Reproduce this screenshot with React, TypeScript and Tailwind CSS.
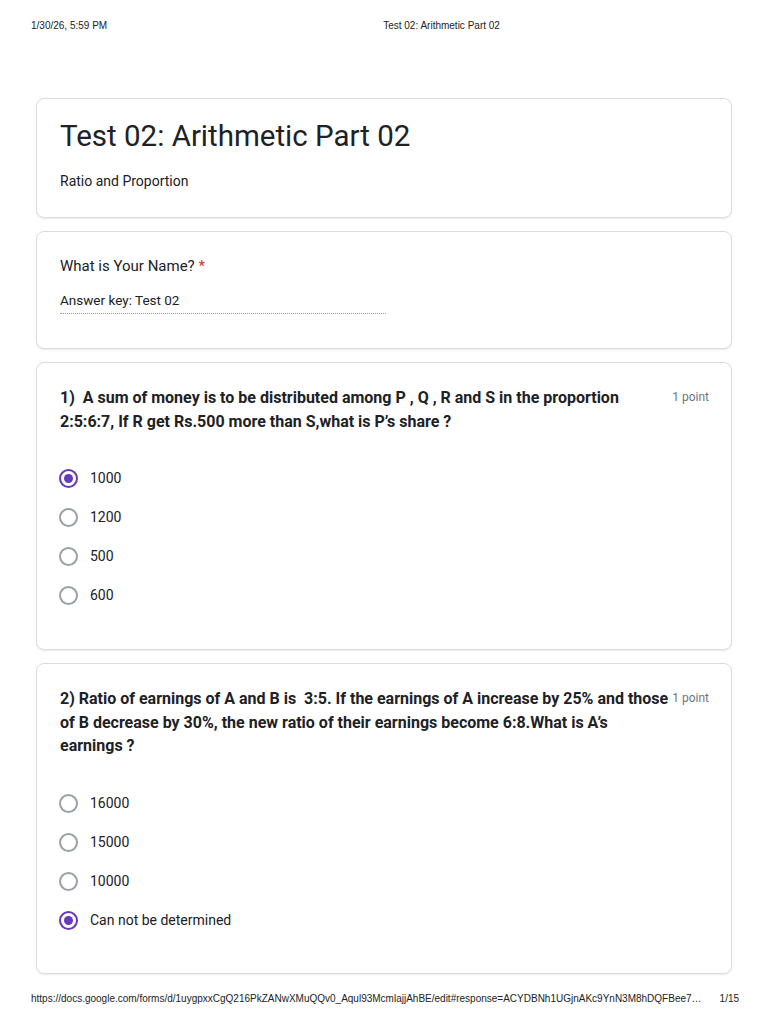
import type { ReactNode } from "react";

const Radio = ({ checked }: { checked?: boolean }) =>
  checked ? (
    <span className="flex size-[19px] items-center justify-center rounded-full border-2 border-[#673ab7]">
      <span className="size-[9px] rounded-full bg-[#673ab7]" />
    </span>
  ) : (
    <span className="size-[19px] rounded-full border-2 border-[#9aa0a6]" />
  );

const Card = ({ children, className = "" }: { children: ReactNode; className?: string }) => (
  <div className={`rounded-lg border border-[#dadce0] bg-white shadow-[0_1px_2px_rgba(0,0,0,0.08)] ${className}`}>
    {children}
  </div>
);

const Option = ({ label, checked }: { label: string; checked?: boolean }) => (
  <div className="flex h-[39px] items-center gap-[12px] pl-[22px]">
    <Radio checked={checked} />
    <span className="text-[14px] text-[#202124]">{label}</span>
  </div>
);

const Question = ({
  text,
  options,
  selected,
  className,
}: {
  text: ReactNode;
  options: string[];
  selected: number;
  className: string;
}) => (
  <Card className={className}>
    <div className="flex items-start justify-between pl-[23px] pr-[22px] pt-[23px]">
      <p className="max-w-[611px] text-[16px] leading-[23.5px] font-bold text-[#202124]">{text}</p>
      <span className="pt-[2px] text-[12px] whitespace-nowrap text-[#70757a]">1 point</span>
    </div>
    <div className="mt-[26px]">
      {options.map((o, i) => (
        <Option key={o} label={o} checked={i === selected} />
      ))}
    </div>
  </Card>
);

export default function App() {
  return (
    <div className="flex h-[1024px] w-[768px] flex-col bg-white font-['Roboto',sans-serif]">
      <div className="flex items-center pt-[18px] font-['Liberation_Sans',Arial,sans-serif] text-[10px] text-[#222]">
        <span className="pl-[31px]">1/30/26, 5:59 PM</span>
        <span className="ml-[276px]">Test 02: Arithmetic Part 02</span>
      </div>

      <div className="mt-[65px] flex flex-col gap-[13px] px-[36px]">
        <Card className="h-[120px] px-[23px] pt-[18px]">
          <h1 className="text-[29.5px] leading-[38px] text-[#202124]">Test 02: Arithmetic Part 02</h1>
          <p className="mt-[16px] text-[14px] text-[#202124]">Ratio and Proportion</p>
        </Card>

        <Card className="h-[118px] px-[23px] pt-[23px]">
          <p className="text-[15px] text-[#202124]">
            What is Your Name? <span className="text-[#d93025]">*</span>
          </p>
          <div className="mt-[12px] w-[326px] border-b border-dotted border-[#9aa0a6] pb-[3px] text-[13.5px] text-[#202124]">
            Answer key: Test 02
          </div>
        </Card>

        <Question
          className="h-[288px]"
          text={
            <>
              1)&nbsp; A sum of money is to be distributed among P , Q , R and S in the proportion 2:5:6:7, If R get
              Rs.500 more than S,what is P’s share ?
            </>
          }
          options={["1000", "1200", "500", "600"]}
          selected={0}
        />

        <Question
          className="h-[311px]"
          text={
            <>
              2) Ratio of earnings of A and B is&nbsp; 3:5. If the earnings of A increase by 25% and those of B decrease
              by 30%, the new ratio of their earnings become 6:8.What is A’s earnings ?
            </>
          }
          options={["16000", "15000", "10000", "Can not be determined"]}
          selected={3}
        />
      </div>

      <div className="mt-auto flex items-center gap-[18px] pb-[18px] pl-[31px] font-['Liberation_Sans',Arial,sans-serif] text-[10px] text-[#222]">
        <span>
          https://docs.google.com/forms/d/1uygpxxCgQ216PkZANwXMuQQv0_Aqul93McmlajjAhBE/edit#response=ACYDBNh1UGjnAKc9YnN3M8hDQFBee7…
        </span>
        <span>1/15</span>
      </div>
    </div>
  );
}
